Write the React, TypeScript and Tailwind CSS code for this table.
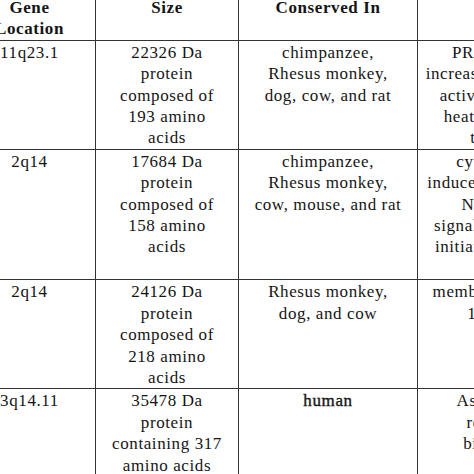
import React from 'react'

interface GeneRow {
  location: string
  size: string[]
  conserved: string[]
  conservedBold?: boolean
  fn: string[]
}

const ROWS: GeneRow[] = [
  {
    location: '11q23.1',
    size: ['22326 Da', 'protein', 'composed of', '193 amino', 'acids'],
    conserved: ['chimpanzee,', 'Rhesus monkey,', 'dog, cow, and rat'],
    fn: [
      'PRDM16 expression,',
      'increases thermogenesis and',
      'activation of the adipose',
      'heat production in cells',
      'tissue in rodents',
    ],
  },
  {
    location: '2q14',
    size: ['17684 Da', 'protein', 'composed of', '158 amino', 'acids'],
    conserved: ['chimpanzee,', 'Rhesus monkey,', 'cow, mouse, and rat'],
    fn: [
      'cytokine that can be',
      'induced by the activation of',
      'NF-κB and MAPK',
      'signaling pathways, and it',
      'initiates the inflammatory',
      'response.',
    ],
  },
  {
    location: '2q14',
    size: ['24126 Da', 'protein', 'composed of', '218 amino', 'acids'],
    conserved: ['Rhesus monkey,', 'dog, and cow'],
    fn: ['membrane protein that has', '1 transmembrane', 'domain.'],
  },
  {
    location: '3q14.11',
    size: ['35478 Da', 'protein', 'containing 317', 'amino acids'],
    conserved: ['human'],
    conservedBold: true,
    fn: ['As part of the IL-33', 'receptor complex', 'binding the ligand', 'IL-33.'],
  },
]

function Lines({ items }: { items: string[] }) {
  return (
    <>
      {items.map((l, i) => (
        <div key={i} className="whitespace-nowrap">
          {l}
        </div>
      ))}
    </>
  )
}

export default function App() {
  const cell = 'border border-[#333] align-top text-center pt-[1px] pb-0 px-0'

  return (
    <div className="w-[474px] h-[474px] overflow-hidden bg-white">
      <table
        className="-ml-[37px] -mt-[5px] table-fixed border-collapse w-[602px] text-[17px] leading-[21.4px] tracking-[0.6px] text-[#151515] font-['Liberation_Serif','Times_New_Roman',serif]"
      >
        <colgroup>
          <col className="w-[132px]" />
          <col className="w-[143px]" />
          <col className="w-[179px]" />
          <col className="w-[226px]" />
        </colgroup>
        <thead>
          <tr>
            <th className={cell + ' font-bold'}>
              <div>Gene</div>
              <div>Location</div>
            </th>
            <th className={cell + ' font-bold'}>Size</th>
            <th className={cell + ' font-bold'}>Conserved In</th>
            <th className={cell + ' font-bold'}>Function</th>
          </tr>
        </thead>
        <tbody>
          {ROWS.map((r, i) => (
            <tr key={i}>
              <td className={cell}>{r.location}</td>
              <td className={cell}>
                <Lines items={r.size} />
              </td>
              <td className={cell + (r.conservedBold ? ' [-webkit-text-stroke:0.35px_#151515]' : '')}>
                <Lines items={r.conserved} />
              </td>
              <td className={cell}>
                <Lines items={r.fn} />
              </td>
            </tr>
          ))}
        </tbody>
      </table>
    </div>
  )
}
